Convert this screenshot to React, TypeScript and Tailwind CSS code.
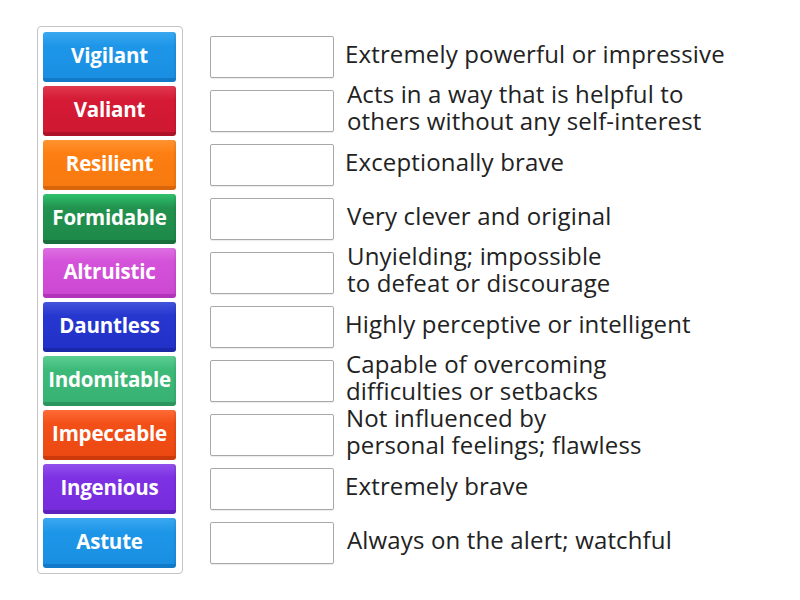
import React from "react";

type Item = { word: string; cls: string };

const words: Item[] = [
  { word: "Vigilant", cls: "bg-[linear-gradient(#3aa8f0,#1e96e8_30%,#1a8fe2)] border-b-[#1279c8]" },
  { word: "Valiant", cls: "bg-[linear-gradient(#e0394f,#d51a35_30%,#cf1832)] border-b-[#ae1229]" },
  { word: "Resilient", cls: "bg-[linear-gradient(#ff9330,#fd7e12_30%,#f77a10)] border-b-[#d8650a]" },
  { word: "Formidable", cls: "bg-[linear-gradient(#2fc26c,#22924f_30%,#1e8a4a)] border-b-[#186f3b]" },
  { word: "Altruistic", cls: "bg-[linear-gradient(#de70e2,#d452d9_30%,#cc48d2)] border-b-[#b133b8]" },
  { word: "Dauntless", cls: "bg-[linear-gradient(#4253dc,#2637cf_30%,#2231c8)] border-b-[#1a27a8]" },
  { word: "Indomitable", cls: "bg-[linear-gradient(#5ccd92,#3dba79_30%,#38b273)] border-b-[#2a955d]" },
  { word: "Impeccable", cls: "bg-[linear-gradient(#ff6a35,#f34f18_30%,#ec4812)] border-b-[#cc3a0b]" },
  { word: "Ingenious", cls: "bg-[linear-gradient(#9250ec,#7d31e3_30%,#772cdc)] border-b-[#6020bf]" },
  { word: "Astute", cls: "bg-[linear-gradient(#3aa8f0,#1e96e8_30%,#1a8fe2)] border-b-[#1279c8]" },
];

const defs: { lines: string[]; ml: string }[] = [
  { lines: ["Extremely powerful or impressive"], ml: "ml-[11px]" },
  { lines: ["Acts in a way that is helpful to", "others without any self-interest"], ml: "ml-[13px]" },
  { lines: ["Exceptionally brave"], ml: "ml-[11px]" },
  { lines: ["Very clever and original"], ml: "ml-[13px]" },
  { lines: ["Unyielding; impossible", "to defeat or discourage"], ml: "ml-[13px]" },
  { lines: ["Highly perceptive or intelligent"], ml: "ml-[11px]" },
  { lines: ["Capable of overcoming", "difficulties or setbacks"], ml: "ml-[12px]" },
  { lines: ["Not influenced by", "personal feelings; flawless"], ml: "ml-[12px]" },
  { lines: ["Extremely brave"], ml: "ml-[11px]" },
  { lines: ["Always on the alert; watchful"], ml: "ml-[13px]" },
];

export default function App() {
  return (
    <div
      className="w-[800px] h-[600px] bg-white flex items-start pt-[26px] pl-[37px]"
      style={{ fontFamily: '"Open Sans", "Liberation Sans", sans-serif' }}
    >
      <div className="w-[146px] border border-[#c4c4c4] rounded-[4px] pt-[5px] pb-[5px] pl-[5px] pr-[6px] flex flex-col gap-[4px]">
        {words.map((w) => (
          <div
            key={w.word}
            className={`h-[50px] rounded-[3px] border-b-[4px] flex items-center justify-center text-white text-[20.5px] font-bold leading-none shadow-[inset_-2px_0_0_rgba(0,0,0,0.06)] ${w.cls}`}
          >
            <span className="tracking-[-0.2px]">{w.word}</span>
          </div>
        ))}
      </div>
      <div className="ml-[27px] pt-[6px] flex flex-col gap-[4px]">
        {defs.map((d, i) => (
          <div key={i} className="h-[50px] flex items-center">
            <div className="w-[124px] h-[42px] border border-[#a8a8a8] rounded-[2px] bg-white shadow-[0_1px_1px_rgba(0,0,0,0.08)]" />
            <div className={`${d.ml} mb-[8px] text-[24px] leading-[27px] tracking-[0.15px] text-[#222222] whitespace-nowrap`}>
              {d.lines.map((l, j) => (
                <div key={j}>{l}</div>
              ))}
            </div>
          </div>
        ))}
      </div>
    </div>
  );
}
